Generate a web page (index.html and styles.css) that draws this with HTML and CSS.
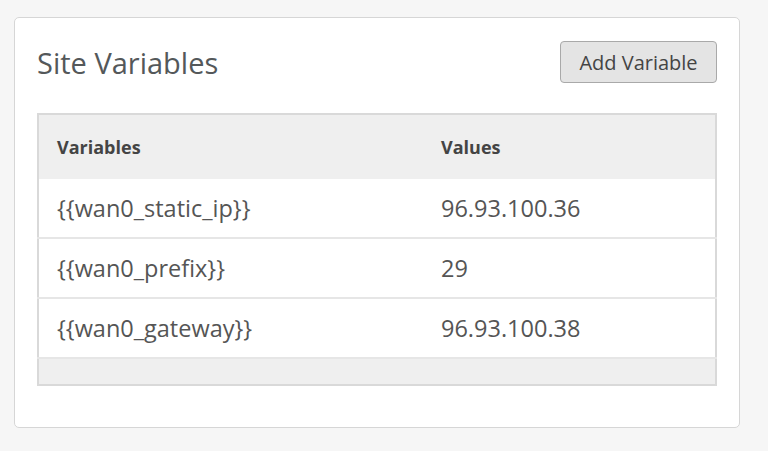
FILE: index.html
```html
<!DOCTYPE html>
<html lang="en">
<head>
  <meta charset="UTF-8">
  <title>Site Variables</title>
  <link rel="stylesheet" href="styles.css">
</head>
<body>
  <div class="card">
    <!-- Header -->
    <div class="card-header">
      <h2 class="card-title">Site Variables</h2>
      <button class="btn">Add Variable</button>
    </div>

    <!-- Variables table -->
    <table class="var-table">
      <thead>
        <tr>
          <th class="col-name">Variables</th>
          <th>Values</th>
        </tr>
      </thead>
      <tbody>
        <tr>
          <td>{{wan0_static_ip}}</td>
          <td>96.93.100.36</td>
        </tr>
        <tr>
          <td>{{wan0_prefix}}</td>
          <td>29</td>
        </tr>
        <tr>
          <td>{{wan0_gateway}}</td>
          <td>96.93.100.38</td>
        </tr>
      </tbody>
      <tfoot>
        <tr>
          <td colspan="2"></td>
        </tr>
      </tfoot>
    </table>
  </div>
</body>
</html>
```

FILE: styles.css
```css
/* General Styling */
body {
  font-family: 'Open Sans', 'Liberation Sans', sans-serif;
  margin: 0;
  padding: 17px 14px;
  background-color: #f6f6f6;
  color: #555;
}

.card {
  width: 726px;
  box-sizing: border-box;
  background-color: #fff;
  border: 1px solid #d6d6d6;
  border-radius: 5px;
  padding: 23px 22px 41px;
}

/* Header */
.card-header {
  display: flex;
  justify-content: space-between;
  align-items: center;
  height: 42px;
  margin-bottom: 30px;
}

.card-title {
  margin: 0;
  font-size: 29px;
  font-weight: normal;
  color: #54585a;
}

.btn {
  width: 157px;
  height: 42px;
  font-family: inherit;
  font-size: 20px;
  color: #444;
  background-color: #e4e4e4;
  border: 1px solid #a9a9a9;
  border-radius: 4px;
  cursor: pointer;
}

/* Table */
.var-table {
  width: 100%;
  border-collapse: collapse;
  border: 2px solid #d9d9d9;
}

.var-table th {
  height: 64px;
  padding: 0 18px;
  text-align: left;
  font-size: 18px;
  font-weight: bold;
  color: #444;
  background-color: #efefef;
}

.var-table .col-name {
  width: 348px;
}

.var-table td {
  height: 58px;
  padding: 0 18px;
  font-size: 23.5px;
  color: #555;
  border-top: 2px solid #e6e6e6;
}

.var-table tbody tr:first-child td {
  border-top: none;
}

.var-table tfoot td {
  height: 25px;
  padding: 0;
  background-color: #efefef;
}
```
